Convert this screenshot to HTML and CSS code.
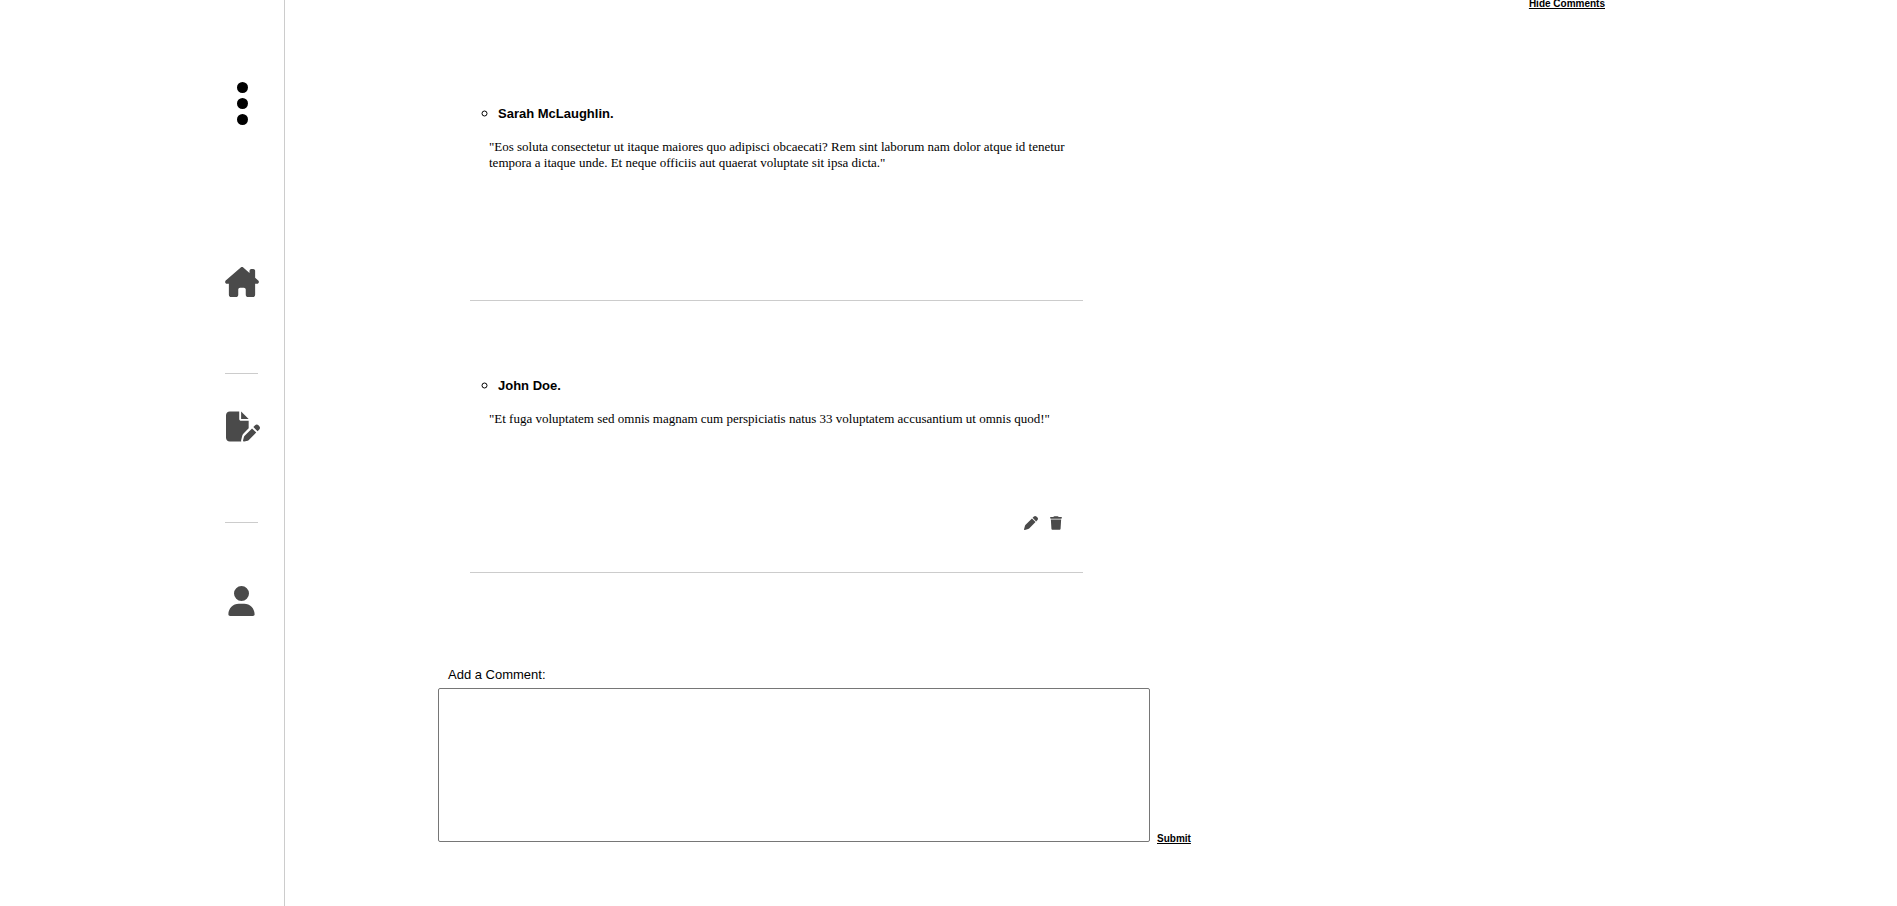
FILE: index.html
```html
<!DOCTYPE html>
<html lang="en">
<head>
<meta charset="utf-8">
<title>Comments</title>
<link rel="stylesheet" href="styles.css">
</head>
<body>
<div class="page">
  <nav class="sidebar">
    <div class="dots"><span class="dot"></span><span class="dot"></span><span class="dot"></span></div>
    <svg class="icon icon-home" viewBox="0 0 576 512"><path d="M543.8 287.6c17 0 32-14 32-32.1c1-9-3-17-11-24L512 185V64c0-17.7-14.3-32-32-32H448c-17.7 0-32 14.3-32 32v36.7L309.5 7c-6-5-14-7-21-7s-15 1-22 8L10 231.5c-7 7-10 15-10 24c0 18 14 32.1 32 32.1h32v69.7c-.1 .9-.1 1.8-.1 2.8V472c0 22.1 17.9 40 40 40h16c1.2 0 2.4-.1 3.6-.2c1.5 .1 3 .2 4.5 .2H160h24c22.1 0 40-17.9 40-40V448 384c0-17.7 14.3-32 32-32h64c17.7 0 32 14.3 32 32v64 24c0 22.1 17.9 40 40 40h24 32.5c1.4 0 2.8 0 4.2-.1c1.1 .1 2.2 .1 3.3 .1h16c22.1 0 40-17.9 40-40V455.8c.3-2.6 .5-5.3 .5-8.1l-.7-160.2h32z"/></svg>
    <div class="divider divider-first"></div>
    <svg class="icon icon-file" viewBox="0 0 576 512"><path d="M0 64C0 28.7 28.7 0 64 0H224V128c0 17.7 14.3 32 32 32H384V285.7l-86.8 86.8c-10.3 10.3-17.5 23.1-21 37.2l-18.7 74.9c-2.3 9.2-1.8 18.8 1.3 27.5H64c-35.3 0-64-28.7-64-64V64zm384 64H256V0L384 128zM549.8 235.7l14.4 14.4c15.6 15.6 15.6 40.9 0 56.6l-29.4 29.4-71-71 29.4-29.4c15.6-15.6 40.9-15.6 56.6 0zM311.9 417L441.1 287.8l71 71L382.9 487.9c-4.1 4.1-9.2 7-14.9 8.4l-60.1 15c-5.5 1.4-11.2-.2-15.2-4.2s-5.6-9.7-4.2-15.2l15-60.1c1.4-5.6 4.3-10.8 8.4-14.9z"/></svg>
    <div class="divider divider-second"></div>
    <svg class="icon icon-user" viewBox="0 0 448 512"><path d="M224 256A128 128 0 1 0 224 0a128 128 0 1 0 0 256zm-45.7 48C79.8 304 0 383.8 0 482.3C0 498.7 13.3 512 29.7 512H418.3c16.4 0 29.7-13.3 29.7-29.7C448 383.8 368.2 304 269.7 304H178.3z"/></svg>
  </nav>
  <main class="content">
    <div class="topbar"><a class="link hide-link" href="#">Hide Comments</a></div>
    <div class="comments">
      <article class="comment">
        <div class="comment-body">
          <h4 class="author">Sarah McLaughlin.</h4>
          <p class="text">"Eos soluta consectetur ut itaque maiores quo adipisci obcaecati? Rem sint laborum nam dolor atque id tenetur tempora a itaque unde. Et neque officiis aut quaerat voluptate sit ipsa dicta."</p>
        </div>
      </article>
      <article class="comment">
        <div class="comment-body">
          <h4 class="author">John Doe.</h4>
          <p class="text">"Et fuga voluptatem sed omnis magnam cum perspiciatis natus 33 voluptatem accusantium ut omnis quod!"</p>
        </div>
        <div class="actions">
          <svg class="action action-pen" viewBox="0 0 512 512"><path d="M362.7 19.3L314.3 67.7 444.3 197.7l48.4-48.4c25-25 25-65.5 0-90.5L453.3 19.3c-25-25-65.5-25-90.5 0zm-71 71L58.6 323.5c-10.4 10.4-18 23.3-22.2 37.4L1 481.2C-1.5 489.7 .8 498.8 7 505s15.3 8.5 23.7 6.1l120.3-35.4c14.1-4.2 27-11.8 37.4-22.2L421.7 220.3 291.7 90.3z"/></svg>
          <svg class="action action-trash" viewBox="0 0 448 512"><path d="M135.2 17.7L128 32H32C14.3 32 0 46.3 0 64S14.3 96 32 96H416c17.7 0 32-14.3 32-32s-14.3-32-32-32H320l-7.2-14.3C307.4 6.8 296.3 0 284.2 0H163.8c-12.1 0-23.2 6.8-28.6 17.7zM416 128H32L53.2 467c1.6 25.3 22.6 45 47.9 45H346.9c25.3 0 46.3-19.7 47.9-45L416 128z"/></svg>
        </div>
      </article>
    </div>
    <form class="comment-form">
      <label class="form-label" for="comment">Add a Comment:</label>
      <div class="form-row">
        <textarea class="form-input" id="comment"></textarea>
        <a class="link submit-link" href="#">Submit</a>
      </div>
    </form>
  </main>
</div>
</body>
</html>
```
FILE: styles.css
```css
* { box-sizing: border-box; }
html, body { margin: 0; padding: 0; background: #fff; }
body { height: 906px; overflow: hidden; }
.page { display: flex; height: 906px; }

.sidebar {
  width: 285px;
  flex: none;
  border-right: 1px solid #ccc;
  padding: 82px 0 0 224px;
  display: flex;
  flex-direction: column;
  align-items: flex-start;
}
.dots { display: flex; flex-direction: column; gap: 5px; margin-left: 13px; }
.dot { width: 11px; height: 11px; border-radius: 50%; background: #000; }
.icon { display: block; fill: #4a4a4a; }
.icon-home { width: 34px; height: 30px; margin: 142px 0 0 1px; }
.divider { width: 33px; height: 1px; background: #ccc; }
.divider-first { margin: 76px 0 0 1px; }
.icon-file { width: 34px; height: 31px; margin: 37px 0 0 2px; }
.divider-second { margin: 80px 0 0 1px; }
.icon-user { width: 27px; height: 30px; margin: 63px 0 0 4px; }

.content { flex: 1; min-width: 0; }
.topbar { height: 29px; display: flex; justify-content: flex-end; padding-right: 292px; }
.link {
  font-family: "Liberation Sans", Arial, sans-serif;
  font-size: 10px;
  font-weight: 700;
  color: #000;
  text-decoration: underline;
  line-height: 8px;
}
.hide-link { display: block; }

.comments { margin: 0 0 0 185px; width: 613px; }
.comment {
  height: 272px;
  border-bottom: 1px solid #ccc;
  display: flex;
  flex-direction: column;
}
.comment-body { padding: 75px 0 0 19px; width: 595px; }
.author {
  display: list-item;
  list-style: circle outside;
  margin: 0 0 0 9px;
  font-family: "Liberation Sans", Arial, sans-serif;
  font-size: 13px;
  font-weight: 700;
  line-height: 18px;
  color: #000;
}
.author::marker { font-size: 16px; }
.text {
  margin: 16px 0 0;
  font-family: "Liberation Serif", "Times New Roman", serif;
  font-size: 13px;
  line-height: 16px;
  color: #000;
}
.actions { margin-top: auto; padding: 0 21px 42px 0; display: flex; justify-content: flex-end; align-items: center; gap: 12px; }
.action { display: block; fill: #4a4a4a; }
.action-pen { width: 14px; height: 14px; }
.action-trash { width: 12px; height: 14px; }

.comment-form { margin: 94px 0 0 153px; }
.form-label {
  display: block;
  margin-left: 10px;
  font-family: "Liberation Sans", Arial, sans-serif;
  font-size: 13px;
  line-height: 15px;
  color: #000;
}
.form-row { display: flex; align-items: flex-end; gap: 7px; margin-top: 6px; }
.form-input {
  display: block;
  width: 712px;
  height: 154px;
  border: 1px solid #767676;
  border-radius: 2px;
  background: #fff;
  padding: 2px;
  resize: none;
}
.submit-link { margin-bottom: -2px; line-height: 10px; }
```
